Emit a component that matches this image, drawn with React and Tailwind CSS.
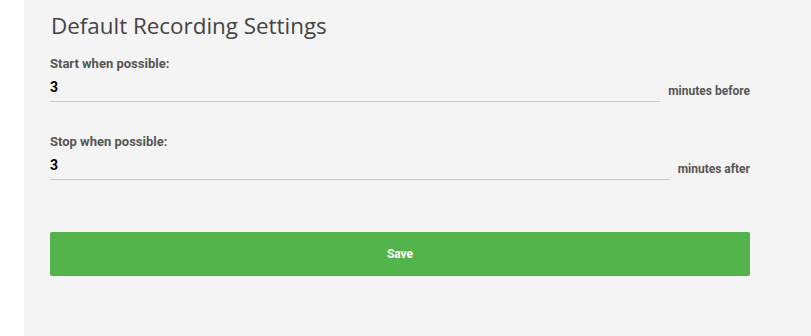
import React from "react";

// Champs de la page des réglages d'enregistrement
const champs = [
  { label: "Start when possible:", value: "3", suffix: "minutes before" },
  { label: "Stop when possible:", value: "3", suffix: "minutes after" },
];

const App = () => {
  return (
    <div className="h-[336px] w-[811px] bg-white pl-[24px]" style={{ fontFamily: "Roboto, 'Liberation Sans', sans-serif" }}>
      <div className="h-full bg-[#f4f4f4] pl-[26px] pt-[10px]">
        <div className="w-[700px]">
          <h1 className="pl-[1px] text-[22.4px] leading-[32px] text-[#444]" style={{ fontFamily: "'Open Sans', 'Noto Sans', sans-serif", fontWeight: 400 }}>
            Default Recording Settings
          </h1>

          {champs.map((champ, index) => (
            <div key={index} className={index === 0 ? "mt-[15px]" : "mt-[33px]"}>
              <label className="block text-[13px] font-bold leading-[14px] text-[#555]">{champ.label}</label>
              <div className="flex items-end">
                <div className="flex-1 border-b border-[#c8c8c8] pt-[8px] pb-[6px] text-[14px] font-bold leading-[16px] text-black">
                  {champ.value}
                </div>
                <span className="ml-[8px] pb-[4px] text-[12px] font-bold leading-[14px] text-[#555]">{champ.suffix}</span>
              </div>
            </div>
          ))}

          <button className="mt-[52px] flex h-[44px] w-full items-center justify-center rounded-[2px] bg-[#52b44b] text-[12px] font-bold text-white">
            Save
          </button>
        </div>
      </div>
    </div>
  );
};

export default App;
